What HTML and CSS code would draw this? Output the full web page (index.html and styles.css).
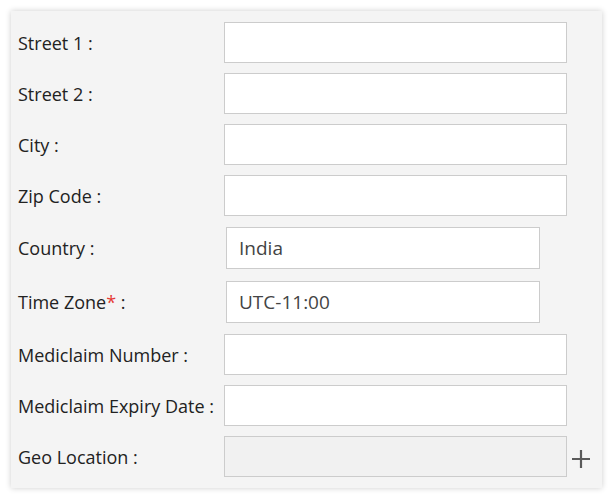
FILE: index.html
```html
<!DOCTYPE html>
<html lang="en">

<head>
    <meta charset="UTF-8">
    <meta name="viewport" content="width=device-width, initial-scale=1.0">
    <title>Address Details</title>
    <link rel="stylesheet" href="styles.css">
</head>

<body>
    <div class="panel">
        <!-- Address -->
        <div class="row">
            <label for="street1">Street 1 :</label>
            <input type="text" id="street1" class="field">
        </div>
        <div class="row">
            <label for="street2">Street 2 :</label>
            <input type="text" id="street2" class="field">
        </div>
        <div class="row">
            <label for="city">City :</label>
            <input type="text" id="city" class="field">
        </div>
        <div class="row">
            <label for="zip">Zip Code :</label>
            <input type="text" id="zip" class="field">
        </div>

        <!-- Region -->
        <div class="row row-select row-country">
            <label for="country">Country :</label>
            <select id="country" class="choice">
                <option>India</option>
            </select>
        </div>
        <div class="row row-select row-tz">
            <label for="timezone">Time Zone<span class="req">*</span> :</label>
            <select id="timezone" class="choice">
                <option>UTC-11:00</option>
            </select>
        </div>

        <!-- Insurance -->
        <div class="row">
            <label for="mediclaim">Mediclaim Number :</label>
            <input type="text" id="mediclaim" class="field">
        </div>
        <div class="row">
            <label for="expiry">Mediclaim Expiry Date :</label>
            <input type="text" id="expiry" class="field">
        </div>
        <div class="row row-last">
            <label for="geo">Geo Location :</label>
            <input type="text" id="geo" class="field" disabled>
            <button class="add-btn" title="Add location">
                <svg width="20" height="20" viewBox="0 0 20 20">
                    <path d="M10 1v18M1 10h18" stroke="#5a5a5a" stroke-width="2.2" fill="none" />
                </svg>
            </button>
        </div>
    </div>
</body>

</html>
```

FILE: styles.css
```css
/* Address form panel */

body {
    font-family: "Open Sans", Arial, sans-serif;
    margin: 0;
    padding: 11px;
    background: #fff;
}

.panel {
    width: 591px;
    height: 477px;
    box-sizing: border-box;
    background-color: #f4f4f4;
    box-shadow: 0 0 6px rgba(0, 0, 0, 0.2);
    padding: 11px 0 11px 7px;
}

.row {
    display: flex;
    align-items: center;
    margin-bottom: 10px;
}

.row label {
    width: 206px;
    font-size: 18px;
    color: #222;
}

.req {
    color: #e53935;
}

.field {
    width: 343px;
    height: 41px;
    box-sizing: border-box;
    border: 1px solid #ccc;
    background: #fff;
    margin: 0;
    padding: 0 12px;
    font-family: inherit;
    font-size: 18px;
}

.field:disabled {
    background: #f1f1f1;
}

.row-select {
    margin-bottom: 12px;
}

.row-country {
    padding-top: 1px;
}

.row-tz {
    margin-bottom: 11px;
}

.choice {
    width: 314px;
    height: 42px;
    box-sizing: border-box;
    margin-left: 2px;
    border: 1px solid #ccc;
    border-radius: 0;
    background: #fff;
    padding: 0 12px;
    font-family: inherit;
    font-size: 19px;
    color: #444;
    appearance: none;
    -webkit-appearance: none;
}

.add-btn {
    border: none;
    background: none;
    padding: 0;
    margin-left: 4px;
    margin-top: 4px;
    cursor: pointer;
    display: flex;
}
```
